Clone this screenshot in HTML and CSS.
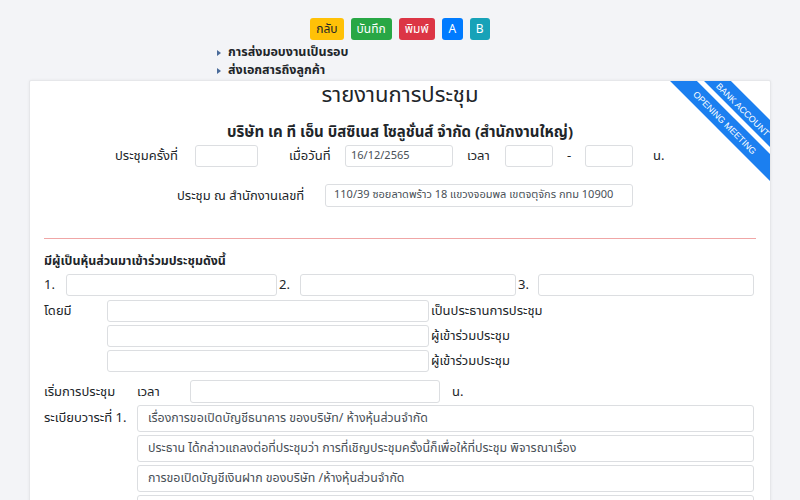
FILE: index.html
```html
<!DOCTYPE html>
<html lang="th">
<head>
<meta charset="utf-8">
<title>รายงานการประชุม</title>
<link rel="stylesheet" href="styles.css">
</head>
<body>
<div class="toolbar">
  <button class="btn btn-warning">กลับ</button>
  <button class="btn btn-success">บันทึก</button>
  <button class="btn btn-danger">พิมพ์</button>
  <button class="btn btn-primary">A</button>
  <button class="btn btn-info">B</button>
</div>
<ul class="links">
  <li>การส่งมอบงานเป็นรอบ</li>
  <li>ส่งเอกสารถึงลูกค้า</li>
</ul>
<div class="card">
  <div class="ribbon ribbon-outer"><span class="ribbon-text">BANK ACCOUNT</span></div>
  <div class="ribbon ribbon-inner"><span class="ribbon-text">OPENING MEETING</span></div>
  <h1 class="title">รายงานการประชุม</h1>
  <h2 class="company">บริษัท เค ที เอ็น บิสซิเนส โซลูชั่นส์ จำกัด (สำนักงานใหญ่)</h2>
  <div class="row row-meeting">
    <span class="lbl lbl-no">ประชุมครั้งที่</span>
    <span class="field f-no"></span>
    <span class="lbl lbl-date">เมื่อวันที่</span>
    <span class="field f-date">16/12/2565</span>
    <span class="lbl lbl-time">เวลา</span>
    <span class="field f-time"></span>
    <span class="lbl lbl-dash">-</span>
    <span class="field f-time"></span>
    <span class="lbl lbl-n">น.</span>
  </div>
  <div class="row row-place">
    <span class="lbl lbl-place">ประชุม ณ สำนักงานเลขที่</span>
    <span class="field f-place">110/39 ซอยลาดพร้าว 18 แขวงจอมพล เขตจตุจักร กทม 10900</span>
  </div>
  <hr class="divider">
  <div class="heading">มีผู้เป็นหุ้นส่วนมาเข้าร่วมประชุมดังนี้</div>
  <div class="row row-partners">
    <span class="num num-1">1.</span>
    <span class="field f-p1"></span>
    <span class="num num-2">2.</span>
    <span class="field f-p"></span>
    <span class="num num-3">3.</span>
    <span class="field f-p"></span>
  </div>
  <div class="attend">
    <div class="attend-label">โดยมี</div>
    <div class="attend-list">
      <div class="attend-row"><span class="field f-attend"></span><span class="lbl">เป็นประธานการประชุม</span></div>
      <div class="attend-row"><span class="field f-attend"></span><span class="lbl">ผู้เข้าร่วมประชุม</span></div>
      <div class="attend-row"><span class="field f-attend"></span><span class="lbl">ผู้เข้าร่วมประชุม</span></div>
    </div>
  </div>
  <div class="row row-start">
    <span class="lbl lbl-start">เริ่มการประชุม</span>
    <span class="lbl lbl-stime">เวลา</span>
    <span class="field f-start"></span>
    <span class="lbl lbl-sn">น.</span>
  </div>
  <div class="agenda">
    <div class="agenda-label">ระเบียบวาระที่ 1.</div>
    <div class="agenda-list">
      <div class="area">เรื่องการขอเปิดบัญชีธนาคาร ของบริษัท/ ห้างหุ้นส่วนจำกัด</div>
      <div class="area">ประธาน ได้กล่าวแถลงต่อที่ประชุมว่า การที่เชิญประชุมครั้งนี้ก็เพื่อให้ที่ประชุม พิจารณาเรื่อง</div>
      <div class="area">การขอเปิดบัญชีเงินฝาก ของบริษัท /ห้างหุ้นส่วนจำกัด</div>
      <div class="area"></div>
    </div>
  </div>
</div>
</body>
</html>
```

FILE: styles.css
```css
* { box-sizing: border-box; }
html, body { margin: 0; padding: 0; }
body {
  background: #f3f4f7;
  font-family: "Noto Sans Thai", "Noto Sans", "DejaVu Sans", sans-serif;
  color: #212529;
  font-size: 13px;
  overflow: hidden;
  height: 500px;
}
.toolbar {
  display: flex;
  justify-content: center;
  gap: 7px;
  padding-top: 18px;
}
.btn {
  height: 22px;
  border: none;
  border-radius: 3px;
  padding: 0 6px;
  font-family: inherit;
  font-size: 12px;
  line-height: 22px;
  color: #fff;
}
.btn-warning { background: #ffc107; color: #212529; }
.btn-success { background: #28a745; }
.btn-danger { background: #dc3545; }
.btn-primary { background: #007bff; width: 21px; padding: 0; }
.btn-info { background: #17a2b8; width: 20px; padding: 0; }
.links {
  list-style: none;
  margin: 4px 0 0;
  padding: 0 0 0 217px;
}
.links li {
  font-weight: 700;
  font-size: 12.5px;
  line-height: 18px;
  height: 18px;
  display: flex;
  align-items: center;
}
.links li::before {
  content: "";
  width: 0; height: 0;
  border-top: 3.5px solid transparent;
  border-bottom: 3.5px solid transparent;
  border-left: 4px solid #4a6b9a;
  margin-right: 7px;
}
.card {
  position: relative;
  overflow: hidden;
  margin: 0 29px;
  background: #fff;
  border: 1px solid #e6e7ea;
  border-radius: 2px;
  box-shadow: 0 0 3px rgba(0,0,0,0.06);
  padding: 0 14px;
  height: 440px;
}
.ribbon {
  position: absolute;
  width: 220px;
  height: 19px;
  background: #1b7ff0;
  color: #fff;
  font-family: "Liberation Sans", Arial, sans-serif;
  font-size: 9px;
  text-align: center;
  padding-top: 7px;
  transform: rotate(45deg);
}
.ribbon-text {
  display: inline-block;
  line-height: 10px;
  vertical-align: top;
}
.ribbon-outer { left: 602.5px; top: 16px; padding-left: 4px; }
.ribbon-inner { left: 585px; top: 31.5px; padding-top: 5px; }
.title {
  margin: 0;
  text-align: center;
  font-size: 22px;
  font-weight: 400;
  line-height: 30px;
}
.company {
  margin: 12px 0 0;
  text-align: center;
  font-size: 15px;
  font-weight: 700;
  line-height: 20px;
}
.row { display: flex; align-items: center; }
.field {
  display: block;
  height: 22px;
  border: 1px solid #dcdee1;
  border-radius: 3px;
  background: #fff;
  font-size: 11px;
  line-height: 20px;
  padding: 0 8px;
  white-space: nowrap;
  color: #495057;
}
.row-meeting { margin-top: 2px; padding-left: 71px; }
.lbl-no { width: 80px; }
.f-no { width: 63px; }
.lbl-date { margin-left: 31px; width: 56px; }
.f-date { width: 108px; padding-left: 5px; }
.lbl-time { margin-left: 14px; width: 38px; }
.f-time { width: 48px; }
.lbl-dash { width: 32px; text-align: center; }
.lbl-n { margin-left: 20px; }
.row-place { margin-top: 17px; padding-left: 133px; }
.lbl-place { width: 148px; }
.f-place { width: 308px; height: 23px; }
.divider {
  margin: 31px 0 0;
  border: none;
  border-top: 1px solid #f0a6a6;
  height: 0;
}
.heading {
  margin-top: 14px;
  font-size: 12.4px;
  font-weight: 700;
  line-height: 18px;
}
.row-partners { margin-top: 3px; }
.num { padding-left: 2px; }
.num-1 { width: 22px; padding-left: 0; }
.num-2 { width: 23px; }
.num-3 { width: 22px; }
.f-p1 { width: 211px; }
.f-p { width: 216px; }
.attend { display: flex; margin-top: 4px; }
.attend-label { width: 63px; line-height: 20px; padding-top: 1px; }
.attend-list { display: flex; flex-direction: column; gap: 3px; }
.attend-row { display: flex; align-items: center; height: 22px; }
.f-attend { width: 322px; margin-right: 2px; }
.row-start { margin-top: 8px; height: 23px; }
.lbl-start { width: 93px; }
.lbl-stime { width: 53px; }
.f-start { width: 250px; height: 23px; }
.lbl-sn { margin-left: 12px; }
.agenda { display: flex; margin-top: 2px; }
.agenda-label { width: 93px; line-height: 27px; }
.agenda-list { display: flex; flex-direction: column; gap: 3px; width: 617px; }
.area {
  height: 27px;
  border: 1px solid #dcdee1;
  border-radius: 3px;
  padding: 0 10px;
  line-height: 25px;
  font-size: 12.4px;
  color: #495057;
  white-space: nowrap;
}
```
